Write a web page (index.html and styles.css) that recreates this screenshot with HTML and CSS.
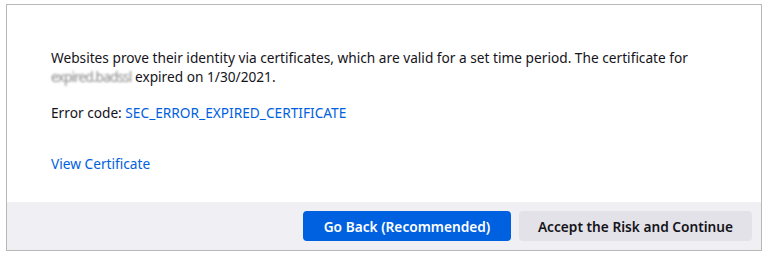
FILE: index.html
```html
<!DOCTYPE html>
<html>
<head>
<meta charset="utf-8">
<link rel="stylesheet" href="styles.css">
</head>
<body>
<div class="dialog">
  <div class="content">
    <p class="desc">Websites prove their identity via certificates, which are valid for a set time period. The certificate for <span class="blur">expired.badssl</span> expired on 1/30/2021.</p>
    <p class="code">Error code: <a class="link" href="#">SEC_ERROR_EXPIRED_CERTIFICATE</a></p>
    <p class="view"><a class="link" href="#">View Certificate</a></p>
  </div>
  <div class="footer">
    <button class="btn primary">Go Back (Recommended)</button>
    <button class="btn secondary">Accept the Risk and Continue</button>
  </div>
</div>
</body>
</html>
```
FILE: styles.css
```css
html, body { margin: 0; padding: 0; background: #fff; }
body { font-family: "Noto Sans", "Open Sans", sans-serif; color: #15141a; }
.dialog {
  margin: 4px 0 0 6px;
  width: 754px;
  height: 245px;
  border: 1px solid #b8b8b8;
  display: flex;
  flex-direction: column;
}
.content {
  flex: 1;
  padding: 43px 40px 0 44px;
  font-size: 13.7px;
  line-height: 19px;
}
.content p { margin: 0; }
.desc { margin-bottom: 17px !important; }
.code { margin-bottom: 32px !important; }
.link { color: #0061e0; text-decoration: none; }
.blur {
  filter: blur(1.2px);
  color: #8a8a8a;
  letter-spacing: -0.9px;
}
.footer {
  height: 48px;
  background: #f0f0f4;
  display: flex;
  justify-content: flex-end;
  align-items: center;
  gap: 8px;
  padding-right: 9px;
}
.btn {
  height: 30px;
  border: none;
  border-radius: 4px;
  font-family: "Noto Sans", "Open Sans", sans-serif;
  font-weight: 600;
  font-size: 13.7px;
  padding: 0;
}
.primary { background: #0061e0; color: #fff; width: 208px; }
.secondary { background: #e2e2e8; color: #15141a; width: 233px; }
```
